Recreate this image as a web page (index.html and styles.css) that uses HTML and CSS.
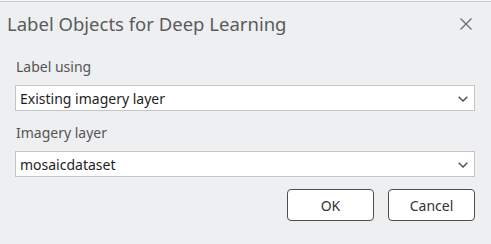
FILE: index.html
```html
<!DOCTYPE html>
<html lang="en">
<head>
    <meta charset="UTF-8">
    <title>Label Objects for Deep Learning</title>
    <link rel="stylesheet" href="styles.css">
</head>
<body>
    <div class="dialog">
        <div class="title-bar">
            <span class="title">Label Objects for Deep Learning</span>
            <span class="close">
                <svg width="12" height="12" viewBox="0 0 12 12">
                    <path d="M0.5 0.5 L11.5 11.5 M11.5 0.5 L0.5 11.5" stroke="#6b6b6b" stroke-width="1.2" fill="none"/>
                </svg>
            </span>
        </div>

        <div class="content">
            <div class="field-label">Label using</div>
            <div class="select">
                <span>Existing imagery layer</span>
                <svg class="chevron" width="10" height="6" viewBox="0 0 10 6">
                    <path d="M0.7 0.7 L5 5 L9.3 0.7" stroke="#4a4a4a" stroke-width="1.4" fill="none"/>
                </svg>
            </div>

            <div class="field-label">Imagery layer</div>
            <div class="select">
                <span>mosaicdataset</span>
                <svg class="chevron" width="10" height="6" viewBox="0 0 10 6">
                    <path d="M0.7 0.7 L5 5 L9.3 0.7" stroke="#4a4a4a" stroke-width="1.4" fill="none"/>
                </svg>
            </div>

            <div class="buttons">
                <button class="btn">OK</button>
                <button class="btn">Cancel</button>
            </div>
        </div>
    </div>
</body>
</html>
```

FILE: styles.css
```css
html, body {
    margin: 0;
    padding: 0;
    background-color: #eeeff1;
}
body {
    font-family: "Noto Sans", "Open Sans", sans-serif;
    width: 491px;
    height: 244px;
    overflow: hidden;
}
.dialog {
    border-top: 1px solid #f7f7f7;
    box-shadow: inset 0 1px 0 #c9cacd;
    height: 243px;
    box-sizing: border-box;
}
.title-bar {
    display: flex;
    align-items: center;
    justify-content: space-between;
    height: 44px;
    padding: 0 19px 0 7px;
}
.title {
    font-size: 18.5px;
    color: #5b5b5b;
}
.close {
    display: flex;
    padding-top: 2px;
}
.content {
    padding: 12px 16px 0 15px;
}
.field-label {
    font-size: 14px;
    color: #555555;
    height: 21px;
    padding-left: 1px;
    line-height: 20px;
    margin-bottom: 7px;
}
.select {
    display: flex;
    align-items: center;
    justify-content: space-between;
    height: 26px;
    box-sizing: border-box;
    border: 1px solid #c4c5c8;
    background-color: #ffffff;
    padding: 0 6px 0 4px;
    font-size: 14px;
    color: #1e1e1e;
    margin-bottom: 12px;
}
.chevron {
    margin-top: 1px;
}
.buttons {
    display: flex;
    justify-content: flex-end;
    gap: 14px;
    margin-top: 10px;
}
.btn {
    width: 87px;
    height: 32px;
    background-color: #ffffff;
    border: 1px solid #4d4d4d;
    border-radius: 4px;
    font-family: "Noto Sans", "Open Sans", sans-serif;
    font-size: 14px;
    color: #333333;
}
```
